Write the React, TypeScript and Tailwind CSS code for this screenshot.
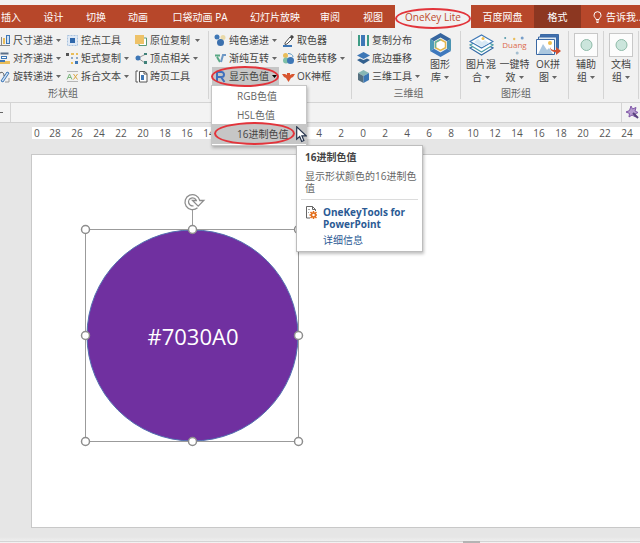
import React from "react";

const Caret = ({ dark = false }: { dark?: boolean }) => (
  <svg className={dark ? "h-[3px] w-[5px] shrink-0 text-black" : "h-[3px] w-[5px] shrink-0 text-[#666]"} viewBox="0 0 5 3" aria-hidden="true">
    <path d="M0 0h5L2.5 3z" fill="currentColor" />
  </svg>
);

const BLUE = "#3e77b6";

function Icon({ name }: { name: string }) {
  return (
    <svg className="h-[13px] w-[13px] shrink-0" viewBox="0 0 13 13" fill="none" aria-hidden="true">
      {name === "size" && (
        <>
          <path d="M3.500 3v8.500M1 11.500h11" stroke="#888" />
          <rect x="5" y="4" width="2" height="6" fill="#e9bd5a" />
          <rect x="8.500" y="1.500" width="3" height="8" fill="#cfe0f2" stroke={BLUE} />
        </>
      )}
      {name === "align" && (
        <>
          <path d="M2.500 1.500h8" stroke="#5b6f88" strokeWidth="2" />
          <rect x="3.500" y="4.500" width="5" height="2" fill="#fff" stroke={BLUE} />
          <rect x="2" y="9" width="10" height="3" fill="#e9bd5a" />
          <rect x="2" y="8" width="5" height="2" fill={BLUE} />
        </>
      )}
      {name === "rotate" && (
        <>
          <path d="M3 11L9 2l2 1-6 9z" fill="#cfe2f5" stroke={BLUE} />
          <path d="M2 3c3-2 4 1 4 3" stroke="#555" />
          <path d="M7 12h4V8" stroke="#999" />
        </>
      )}
      {name === "point" && (
        <>
          <rect x="1.500" y="1.500" width="10" height="10" fill="#dfe9f5" stroke="#a9c2df" strokeDasharray="2 1" />
          <rect x="4" y="4" width="5" height="5" fill="#2f68ab" />
        </>
      )}
      {name === "matrix" && (
        <>
          <path d="M0 1h3v3H0z" fill="#555" />
          <path d="M5 1h3v2H5zM10 1h2v2h-2z" fill="#e9bd5a" />
          <path d="M5 5h2v2H5zM10 5h2v2h-2z" fill="#8fa9c8" />
          <path d="M5 10h2v2H5z" fill="#e9bd5a" />
          <path d="M9 9h3v3H9z" fill={BLUE} />
        </>
      )}
      {name === "split" && (
        <>
          <path d="M1 1.500h11M1 11.500h11" stroke="#b6b6b6" />
          <path d="M1 9.500L3.500 4 6 9.500M2 7.500h3" stroke="#7db77d" />
          <path d="M7.500 4l4 5.500M11.500 4l-4 5.500" stroke="#d9a640" />
        </>
      )}
      {name === "copy" && (
        <>
          <path d="M4 4h7.500v7.500H4z" fill="#fff" stroke="#5b9a76" />
          <path d="M0 1h9v9H0z" fill="#eec268" />
        </>
      )}
      {name === "vertex" && (
        <>
          <path d="M11 2L3 6l7 5" stroke="#999" />
          <circle cx="3" cy="6" r="2.500" fill={BLUE} />
          <path d="M9 1h3v2H9zM9 9h3v3H9z" fill="#3f8179" />
        </>
      )}
      {name === "pages" && (
        <>
          <path d="M3 1H1v11h2M4.500 1.500h5l2.500 2V12H4.500z" fill="#fff" stroke="#555" />
          <rect x="6" y="5" width="3" height="5" fill={BLUE} />
          <path d="M9 1v3h3" stroke="#555" />
        </>
      )}
      {name === "pure" && (
        <>
          <circle cx="3" cy="3" r="2.500" fill={BLUE} />
          <circle cx="9" cy="3.500" r="2.500" fill="#e9d9a8" />
          <circle cx="6.500" cy="8.500" r="3.500" fill="#3c70ae" />
        </>
      )}
      {name === "convert" && (
        <>
          <path d="M1 3.500h5M3 5l3 5" stroke="#58a884" strokeWidth="2" />
          <path d="M7 10l2-7h3" stroke="#6d97c5" strokeWidth="2" />
        </>
      )}
      {name === "value" && (
        <path d="M3 12V2h4.500a2.500 2.500 0 010 5H3M7 7l3.500 5" stroke="#3f70bd" strokeWidth="2" />
      )}
      {name === "picker" && (
        <>
          <path d="M3 9l5-6 2 2-5 5-2 .5z" fill="#fff" stroke="#555" />
          <path d="M8 2l2-1 2 2-2 2z" fill="#444" />
          <path d="M1 12h9" stroke={BLUE} strokeWidth="2" />
        </>
      )}
      {name === "shift" && (
        <>
          <circle cx="3.500" cy="3.500" r="2.500" fill="#e9bd5a" />
          <path d="M6 1.500c3 0 5 1.500 5 3.500" stroke="#5f9bc6" />
          <circle cx="4" cy="8.500" r="3" fill="#7fc0a8" />
          <circle cx="8.500" cy="8.500" r="3.500" fill={BLUE} />
        </>
      )}
      {name === "frame" && (
        <path d="M0 4h3l2 1V3h3v2l2-1h3l-2 3-2 1-2.500 4L4 8 2 7z" fill="#d8552f" />
      )}
      {name === "spread" && (
        <>
          <path d="M2 1v11M11 1v11" stroke="#3e9c85" strokeWidth="2" />
          <rect x="4" y="1" width="4" height="11" fill={BLUE} />
        </>
      )}
      {name === "layers" && (
        <>
          <path d="M6.500 0L13 3.500 6.500 7 0 3.500z" fill={BLUE} />
          <path d="M0 8l3-1.500L6.500 8 10 6.500 13 8l-6.500 4z" fill="#34618f" />
        </>
      )}
      {name === "cube" && (
        <>
          <path d="M6.500 0L12 3 6.500 6 1 3z" fill="#86b6b4" />
          <path d="M1 3l5.500 3v7L1 10z" fill="#56707f" />
          <path d="M12 3L6.500 6v7L12 10z" fill="#3c77b4" />
        </>
      )}
    </svg>
  );
}

function Tool({ icon, label, caret = false }: { icon: string; label: string; caret?: boolean }) {
  return (
    <button type="button" className="flex h-[18px] items-center gap-[2px] whitespace-nowrap">
      <Icon name={icon} />
      <span>{label}</span>
      {caret && <span className="pl-[1px]"><Caret /></span>}
    </button>
  );
}

function BigTool({ lines, width, children }: { lines: [string, string]; width: string; children: React.ReactNode }) {
  return (
    <button type="button" className={`flex shrink-0 flex-col items-center pt-[1px] ${width}`}>
      <span className="flex h-[26px] items-center">{children}</span>
      <span className="block h-[13px] whitespace-nowrap leading-[13px]">{lines[0]}</span>
      <span className="flex h-[13px] items-center gap-[3px] leading-[13px]">
        {lines[1]}
        <Caret />
      </span>
    </button>
  );
}

function Group({ label, width, children }: { label?: string; width: string; children: React.ReactNode }) {
  return (
    <section className={`my-[3px] flex shrink-0 flex-col border-r border-[#d4d4d4] ${width}`}>
      <div className="flex h-[55px]">{children}</div>
      {label && <div className="pt-[2px] text-center leading-[12px] text-[#666]">{label}</div>}
    </section>
  );
}

const Ring = ({ className }: { className: string }) => (
  <span className={`pointer-events-none absolute rounded-[50%] border-2 border-[#e2343b] ${className}`} />
);

const tabs = [
  { label: "插入", cls: "-ml-[10px] w-[42px]" },
  { label: "设计", cls: "w-[43px]" },
  { label: "切换", cls: "w-[42px]" },
  { label: "动画", cls: "w-[42px]" },
  { label: "口袋动画 PA", cls: "w-[82px]" },
  { label: "幻灯片放映", cls: "w-[68px]" },
  { label: "审阅", cls: "w-[42px]" },
  { label: "视图", cls: "w-[44px]" },
];

function TabBar() {
  return (
    <nav className="flex h-[23px] items-stretch bg-[#b7472a] text-white">
      {tabs.map((t) => (
        <button key={t.label} type="button" className={`shrink-0 whitespace-nowrap text-center ${t.cls}`}>
          {t.label}
        </button>
      ))}
      <button type="button" className="relative w-[76px] shrink-0 bg-[#f1f1f1] text-[#c0492c]">
        OneKey Lite
        <Ring className="-bottom-px left-0 right-0 top-[3px]" />
      </button>
      <button type="button" className="w-[63px] shrink-0">百度网盘</button>
      <button type="button" className="w-[47px] shrink-0 bg-[#8c3721]">格式</button>
      <button type="button" className="flex shrink-0 items-center gap-[4px] whitespace-nowrap pl-[12px]">
        <svg className="h-[12px] w-[9px]" viewBox="0 0 9 12" fill="none" stroke="#fff" aria-hidden="true">
          <path d="M3 8.500C3 7 1 6.500 1 4.200a3.500 3.500 0 017 0C8 6.500 6 7 6 8.500zM3 10h3M3.500 11.500h2" />
        </svg>
        告诉我..
      </button>
    </nav>
  );
}

function Tooltip() {
  return (
    <div role="tooltip" className="absolute left-[84px] top-[21px] z-30 w-[127px] border border-[#bdbdbd] bg-white text-left text-[#666] shadow-[1px_2px_3px_rgba(0,0,0,0.25)]">
      <div className="pb-[5px] pl-[8px] pt-[5px]">
        <p className="pb-[7px] font-bold leading-[12px] text-[#444]">16进制色值</p>
        <p className="leading-[12px]">显示形状颜色的16进制色<br />值</p>
      </div>
      <div className="mx-[4px] border-t border-[#dcdcdc]" />
      <div className="flex gap-[6px] px-[9px] pb-[4px] pt-[6px]">
        <svg className="h-[14px] w-[11px] shrink-0" viewBox="0 0 11 14" fill="none" aria-hidden="true">
          <path d="M4 12H.5V.5h6l3 3V5M6.500.5v3h3" stroke="#666" />
          <path d="M2 3.500h2M2 6.500h1" stroke="#aaa" />
          <path d="M7.500 5v8M3.500 9h8M4.500 6l6 6M10.500 6l-6 6" stroke="#e3701e" strokeWidth="1.500" />
          <circle cx="7.500" cy="9" r="2" fill="#fff" stroke="#e3701e" strokeWidth="1.500" />
        </svg>
        <div className="whitespace-nowrap text-[#2b5a94]">
          <p className="font-bold leading-[12px]">OneKeyTools for<br />PowerPoint</p>
          <a href="#details" className="block pt-[3px] leading-[14px]">详细信息</a>
        </div>
      </div>
    </div>
  );
}

function ValueMenu() {
  return (
    <div className="relative w-[67px]">
      <button type="button" className="flex h-[18px] w-full items-center gap-[2px] whitespace-nowrap bg-[#c6c6c6] pl-[2px]">
        <Icon name="value" />
        <span>显示色值</span>
        <span className="pl-[1px]"><Caret dark /></span>
      </button>
      <div role="menu" className="absolute -left-px top-[18px] z-20 w-[96px] border border-[#c6c6c6] bg-white pb-px text-[#666] shadow-[1px_2px_3px_rgba(0,0,0,0.25)]">
        <button type="button" role="menuitem" className="block h-[19px] w-full pl-[25px] text-left">RGB色值</button>
        <button type="button" role="menuitem" className="block h-[19px] w-full pl-[25px] text-left">HSL色值</button>
        <div className="relative">
          <button type="button" role="menuitem" className="block h-[20px] w-full bg-[#c6c6c6] pl-[25px] text-left text-[#444]">16进制色值</button>
          <Ring className="-bottom-px -top-[2px] left-[2px] w-[81px]" />
          <Tooltip />
          <svg className="absolute left-[84px] top-[2px] z-40 h-[17px] w-[11px]" viewBox="0 0 11 17" aria-hidden="true">
            <path d="M.7.8v12.400l3-2.700 2 5 2.200-1-2-4.700h4.300z" fill="#fff" stroke="#26344d" strokeWidth="1.200" />
          </svg>
        </div>
      </div>
      <Ring className="-bottom-[2px] -left-px right-0 -top-px z-30" />
    </div>
  );
}

const DotBox = () => (
  <svg className="h-[24px] w-[24px]" viewBox="0 0 24 24" aria-hidden="true">
    <rect x=".5" y=".5" width="23" height="23" fill="#fcfcfc" stroke="#c8c8c8" />
    <circle cx="12.500" cy="12" r="5.500" fill="#cbe5dc" stroke="#8fbba9" />
  </svg>
);

function Ribbon() {
  return (
    <div className="flex h-[75px] overflow-visible border-b border-[#d4d4d4] bg-[#f1f1f1] text-[#444]">
      <Group label="形状组" width="w-[209px] [&>div:last-child]:pr-[82px]">
        <div className="-ml-[2px] w-[68px] shrink-0">
          <Tool icon="size" label="尺寸递进" caret />
          <Tool icon="align" label="对齐递进" caret />
          <Tool icon="rotate" label="旋转递进" caret />
        </div>
        <div className="w-[69px] shrink-0">
          <Tool icon="point" label="控点工具" />
          <Tool icon="matrix" label="矩式复制" caret />
          <Tool icon="split" label="拆合文本" caret />
        </div>
        <div className="shrink-0">
          <div className="flex items-center gap-[5px]">
            <Tool icon="copy" label="原位复制" />
            <Caret />
          </div>
          <Tool icon="vertex" label="顶点相关" caret />
          <Tool icon="pages" label="跨页工具" />
        </div>
      </Group>
      <Group width="w-[143px] pl-[3px]">
        <div className="w-[70px] shrink-0">
          <div className="pl-[2px]">
            <Tool icon="pure" label="纯色递进" caret />
            <Tool icon="convert" label="渐纯互转" caret />
          </div>
          <ValueMenu />
        </div>
        <div className="shrink-0">
          <Tool icon="picker" label="取色器" />
          <Tool icon="shift" label="纯色转移" caret />
          <Tool icon="frame" label="OK神框" />
        </div>
      </Group>
      <Group label="三维组" width="w-[109px] pl-[5px]">
        <div className="w-[64px] shrink-0">
          <Tool icon="spread" label="复制分布" />
          <Tool icon="layers" label="底边垂移" />
          <Tool icon="cube" label="三维工具" caret />
        </div>
        <BigTool lines={["图形", "库"]} width="w-[38px]">
          <svg className="h-[24px] w-[23px]" viewBox="0 0 23 24" fill="none" aria-hidden="true">
            <path d="M1 6L11.500 0 22 6l-4 2.200-6.500-3.700L5 8.200z" fill="#36659f" />
            <path d="M1 6v12l4-2.300V8.200z" fill="#4f9bb8" />
            <path d="M22 6v12l-4-2.300V8.200z" fill="#4b94b2" />
            <path d="M1 18l10.500 6L22 18l-4-2.300-6.500 3.800L5 15.700z" fill="#3f79bd" />
            <path d="M11.500 6.500l5 2.800v5.400l-5 2.800-5-2.800V9.300z" fill="#fff" stroke="#e3b74e" strokeWidth="1.500" />
            <path d="M6.500 14.700V9.300l5-2.800" stroke="#62b3a3" strokeWidth="1.500" />
          </svg>
        </BigTool>
      </Group>
      <Group label="图形组" width="w-[108px] pl-[3px]">
        <BigTool lines={["图片混", "合"]} width="w-[34px]">
          <svg className="h-[22px] w-[25px]" viewBox="0 0 25 22" fill="#fff" strokeWidth="1.200" aria-hidden="true">
            <path d="M1 14l11.500-6L24 14l-11.500 7z" stroke="#346ba6" />
            <path d="M1 11l11.500-6L24 11l-11.500 7z" stroke="#4d9ea7" />
            <path d="M1 7.500L12.500 1 24 7.500 12.500 14z" stroke="#3f78b5" />
            <path d="M5 8l4-3 4 3 3-2 4 3-7 4z" fill="#d8e9f5" />
            <circle cx="14" cy="4.500" r="1.500" fill="#efbd4e" />
          </svg>
        </BigTool>
        <BigTool lines={["一键特", "效"]} width="w-[33px]">
          <span className="relative flex h-[22px] items-center text-[8px] text-[#dc6a4b]">
            <svg className="absolute inset-0 h-[22px] w-full" viewBox="0 0 24 22" aria-hidden="true">
              <circle cx="3" cy="4" r="1" fill="#59a" />
              <circle cx="12" cy="5" r="1.200" fill="#e9bd5a" />
              <circle cx="20" cy="4" r="1.500" fill="#789fca" />
              <circle cx="15" cy="19" r="1.500" fill="#a4bed0" />
            </svg>
            Duang
          </span>
        </BigTool>
        <BigTool lines={["OK拼", "图"]} width="w-[34px]">
          <svg className="h-[22px] w-[25px]" viewBox="0 0 25 22" fill="#fff" aria-hidden="true">
            <path d="M4.500.5h18v14h-18z" fill="#3f6fae" stroke="#3b69a4" />
            <path d="M2.500 3h18v15h-18z" fill="#dce8f4" stroke="#3b69a4" />
            <path d="M.5 5.500h18v15H.5z" stroke="#3b69a4" />
            <path d="M2 20l5-10 4 6 2-2 4 6z" fill="#abc7df" />
            <circle cx="14" cy="9" r="2" fill="#efbd4e" />
            <path d="M14 13c1 3 3 3 6 3v-3l5 4-5 4v-3c-4 0-6-2-6-5z" fill="#cf5034" />
          </svg>
        </BigTool>
      </Group>
      <Group width="w-[35px]">
        <BigTool lines={["辅助", "组"]} width="w-[34px]"><DotBox /></BigTool>
      </Group>
      <Group width="w-[35px]">
        <BigTool lines={["文档", "组"]} width="w-[34px]"><DotBox /></BigTool>
      </Group>
    </div>
  );
}

const rulerMarks = [28, 26, 24, 22, 20, 18, 16, 14, 12, 10, 8, 6, 4, 2, 0, 2, 4, 6, 8, 10, 12, 14, 16, 18, 20, 22, 24];

const handles = [
  [5, 40], [112, 40], [218, 40],
  [5, 146], [218, 146],
  [5, 252], [112, 252], [218, 252],
];

function SelectedShape() {
  return (
    <div className="absolute left-[48px] top-[34px] h-[260px] w-[226px]">
      <svg className="absolute inset-0 h-full w-full" viewBox="0 0 226 260" fill="none" aria-hidden="true">
        <circle cx="112.500" cy="146.500" r="105.500" fill="#7030a0" stroke="#5270b0" />
        <path d="M5.500 40.500h213v212h-213zM112.500 20v18" stroke="#9b9b9b" />
        <g stroke="#8d8d8d" strokeWidth="1.500" fill="#fff">
          {handles.map(([x, y]) => (
            <circle key={`${x}-${y}`} cx={x + 0.5} cy={y + 0.5} r="4" />
          ))}
        </g>
        <g stroke="#8d8d8d" strokeWidth="1.300">
          <path d="M117.500 18.700A7.500 7.500 0 11119.800 11.500h4l-5.600 5.700-5.700-5.700h3.800A4 4 0 10113.500 16.800" />
        </g>
      </svg>
      <div className="relative flex h-full items-center justify-center pt-[34px] font-['Open_Sans',sans-serif] text-[22px] leading-none text-white">#7030A0</div>
    </div>
  );
}

export default function App() {
  return (
    <div className="flex min-h-screen flex-col overflow-hidden bg-[#e6e6e6] font-['Open_Sans','Noto_Sans_CJK_SC',sans-serif] text-[10px] leading-[12px]">
      <div className="h-[5px] bg-[#f1f1f1]" />
      <TabBar />
      <Ribbon />
      <div className="flex h-[20px] items-stretch border-b border-[#d0d0d0] bg-[#f3f3f3]">
        <div className="flex w-[11px] items-center border-r border-[#d4d4d4]">
          <span className="h-px w-[3px] bg-[#666]" />
        </div>
        <div className="flex-1" />
        <button type="button" aria-label="动画" className="flex w-[19px] items-center border-l border-[#d4d4d4] pl-[4px]">
          <svg className="h-[13px] w-[13px]" viewBox="0 0 13 13" aria-hidden="true">
            <path d="M5 0l1.500 3L10 1.500 9 5l3 1.500L9 8l.5 3L6 9l-3 2 .5-3.500L0 6l3.500-1.500z" fill="#b69ccf" stroke="#8058a8" />
            <path d="M7 7l5 5" stroke="#57417b" strokeWidth="2" />
          </svg>
        </button>
      </div>
      <div className="ml-[32px] mt-[4px] flex h-[12px] overflow-hidden bg-white text-[#555]">
        <span className="w-[12px] shrink-0 pl-[2px]">0</span>
        {rulerMarks.map((n, i) => (
          <span key={i} className="w-[22px] shrink-0 text-center">{n}</span>
        ))}
      </div>
      <main className="relative ml-[31px] mt-[15px] min-h-[320px] flex-1 border-y border-l border-[#c8c8c8] bg-white">
        <SelectedShape />
      </main>
      <footer className="mt-[9px] flex h-[6px] flex-col bg-[#f1f1f1] bg-linear-to-b from-[#e6e6e6] to-[#f3f3f3]">
        <div className="mt-auto h-[2px] border-t border-[#d4d4d4] pl-[463px]">
          <div className="-mt-px h-[2px] w-[17px] bg-[#b4b4b4]" />
        </div>
      </footer>
    </div>
  );
}
